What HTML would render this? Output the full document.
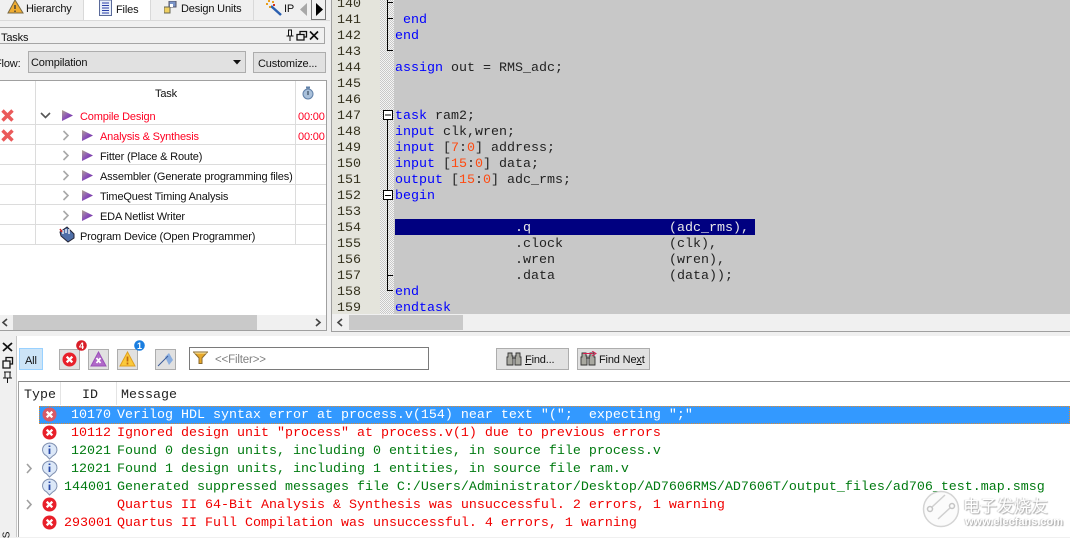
<!DOCTYPE html>
<html><head><meta charset="utf-8"><style>
html,body{margin:0;padding:0;width:1070px;height:537px;overflow:hidden;background:#f0f0f0}
div,span.a,svg{position:absolute}
.t{position:absolute;margin-top:1px;font:11px/16px "Liberation Sans",sans-serif;letter-spacing:-.16px;color:#111;white-space:pre}
.m{position:absolute;margin-top:2px;font:13.33px/16px "Liberation Mono",monospace;color:#222;white-space:pre}
.k{color:#0000ff}.n{color:#ff4a10}
.l{position:absolute;margin-top:2px;left:337px;font:13.33px/16px "Liberation Mono",monospace;color:#33301c}
.r{color:#ff0022}
.g{color:#007a10}.e{color:#f00000}
.id{width:47px;text-align:right;left:64px}
.btn{position:absolute;background:#e1e1e1;border:1px solid #adadad;box-sizing:border-box}
.hl{position:absolute;left:0;width:326px;height:1px;background:#dcdcdc}
</style></head><body>

<!-- tabs -->
<div style="left:0;top:0;width:330px;height:20px;background:#f0f0f0;border-bottom:1px solid #d9d9d9"></div>
<div style="left:83px;top:0;width:68px;height:21px;background:#fff;border:1px solid #d9d9d9;border-top:0;box-sizing:border-box"></div>
<div style="left:253px;top:0;width:1px;height:20px;background:#d9d9d9"></div>
<svg style="left:7px;top:0" width="17" height="14"><path d="M8 0L16 13H1Z" fill="#f0ac30" stroke="#7a6a45"/><path d="M8 5v4M8 10.500v1.500" stroke="#333" stroke-width="1.300"/></svg>
<span class="t" style="left:26px;top:0">Hierarchy</span>
<svg style="left:99px;top:0" width="13" height="16"><path d="M.5 0H12.500V15.500H.5Z" fill="#e8effa" stroke="#5a6a9a"/><path d="M3 3H10M3 5.500H10M3 8H10M3 10.500H10M3 13H10" stroke="#2a3fa8"/></svg>
<span class="t" style="left:116px;top:1px">Files</span>
<svg style="left:164px;top:1px" width="13" height="13"><rect x="5" y="0" width="7" height="6" fill="#7a94c8" stroke="#556"/><rect x="0" y="6" width="6" height="6" fill="#f0d060" stroke="#665"/><rect x="6" y="3" width="3" height="3" fill="#fff"/></svg>
<span class="t" style="left:181px;top:0">Design Units</span>
<svg style="left:265px;top:0" width="17" height="16"><path d="M6 6L16 15" stroke="#2a5fb0" stroke-width="2.500"/><path d="M3 1h2M1 4h2M7 2h2M4 7h2" stroke="#e8a020" stroke-width="2"/><path d="M8 5h2" stroke="#d03020" stroke-width="2"/></svg>
<span class="t" style="left:284px;top:0">IP</span>
<div style="left:296px;top:0;width:15px;height:20px;background:#f0f0f0"></div>
<div style="left:311px;top:0;width:15px;height:20px;background:#f0f0f0;border-left:1px solid #777;border-right:1px solid #777;border-bottom:1px solid #777;box-sizing:border-box"></div>
<svg style="left:299px;top:2px" width="9" height="15"><path d="M8 1V14L1 7.500Z" fill="#a8a8a8"/></svg>
<svg style="left:315px;top:2px" width="9" height="15"><path d="M1 1V14L8 7.500Z" fill="#000"/></svg>

<!-- tasks header -->
<div style="left:-1px;top:27px;width:326px;height:17px;border:1px solid #a5a5a5;box-sizing:border-box"></div>
<span class="t" style="left:1px;top:29px">Tasks</span>
<svg style="left:285px;top:29px" width="34" height="13" fill="none" stroke="#111"><path d="M3 1H7M3.500 1V7M6.500 1V7M1.500 7H8.500M5 7V12"/><path d="M12 5.500H19V11H12ZM15 5V2.500H21.500V8H19" stroke-width="1.300"/><path d="M25 2.500L33 10.500M33 2.500L25 10.500" stroke-width="1.600"/></svg>

<!-- flow -->
<span class="t" style="left:-5px;top:55px">Flow:</span>
<div class="btn" style="left:28px;top:51px;width:218px;height:22px"></div>
<span class="t" style="left:31px;top:54px">Compilation</span>
<svg style="left:233px;top:60px" width="8" height="5"><path d="M0 0H8L4 4.500Z" fill="#111"/></svg>
<div class="btn" style="left:253px;top:52px;width:73px;height:21px"></div>
<span class="t" style="left:258px;top:55px">Customize...</span>

<!-- task table -->
<div style="left:-1px;top:80px;width:328px;height:251px;background:#fff;border:1px solid #a0a0a0;box-sizing:border-box"></div>
<div style="left:35px;top:81px;width:1px;height:163px;background:#dcdcdc"></div>
<div style="left:295px;top:81px;width:1px;height:163px;background:#dcdcdc"></div>
<div style="left:326px;top:80px;width:1px;height:251px;background:#a0a0a0"></div>
<div class="hl" style="top:124px"></div><div class="hl" style="top:144px"></div><div class="hl" style="top:164px"></div><div class="hl" style="top:184px"></div><div class="hl" style="top:204px"></div><div class="hl" style="top:224px"></div><div class="hl" style="top:244px"></div>
<span class="t" style="left:155px;top:85px">Task</span>
<svg style="left:302px;top:86px" width="12" height="14"><circle cx="6" cy="8" r="5" fill="#a9c0da" stroke="#6080a8"/><path d="M6 5V9" stroke="#234" /><path d="M4 1.500H8" stroke="#6080a8" stroke-width="2"/></svg>

<svg style="left:1px;top:109px" width="13" height="13"><path d="M1.500 1.500L11.500 11.500M11.500 1.500L1.500 11.500" stroke="#ea5a5a" stroke-width="3.400"/></svg>
<svg style="left:1px;top:129px" width="13" height="13"><path d="M1.500 1.500L11.500 11.500M11.500 1.500L1.500 11.500" stroke="#ea5a5a" stroke-width="3.400"/></svg>
<svg style="left:40px;top:112px" width="11" height="7"><path d="M1 1L5.500 5.500L10 1" fill="none" stroke="#555" stroke-width="1.600"/></svg>
<svg style="left:61px;top:109px" width="13" height="13"><defs><linearGradient id="p" x1="0" y1="0" x2="1" y2="1"><stop offset="0" stop-color="#b0a890"/><stop offset=".5" stop-color="#8a50b8"/><stop offset="1" stop-color="#6a2a98"/></linearGradient></defs><path d="M1 1L12 6.500L1 12Z" fill="url(#p)"/></svg>
<span class="t r" style="left:80px;top:108px">Compile Design</span>
<span class="t r" style="left:298px;top:108px;width:28px;overflow:hidden">00:00</span>

<!-- sub rows -->
<svg style="left:62px;top:130px" width="8" height="110" fill="none" stroke="#a8a8a8" stroke-width="1.600"><path d="M1.500 1L6 5.500L1.500 10M1.500 21L6 25.500L1.500 30M1.500 41L6 45.500L1.500 50M1.500 61L6 65.500L1.500 70M1.500 81L6 85.500L1.500 90"/></svg>
<svg style="left:81px;top:129px" width="13" height="93"><path d="M1 1L12 6.500L1 12Z" fill="url(#p)"/><path d="M1 21L12 26.500L1 32Z" fill="url(#p)"/><path d="M1 41L12 46.500L1 52Z" fill="url(#p)"/><path d="M1 61L12 66.500L1 72Z" fill="url(#p)"/><path d="M1 81L12 86.500L1 92Z" fill="url(#p)"/></svg>
<span class="t r" style="left:100px;top:128px">Analysis &amp; Synthesis</span>
<span class="t r" style="left:298px;top:128px;width:28px;overflow:hidden">00:00</span>
<span class="t" style="left:100px;top:148px">Fitter (Place &amp; Route)</span>
<span class="t" style="left:100px;top:168px">Assembler (Generate programming files)</span>
<span class="t" style="left:100px;top:188px">TimeQuest Timing Analysis</span>
<span class="t" style="left:100px;top:208px">EDA Netlist Writer</span>
<svg style="left:59px;top:226px" width="17" height="17"><path d="M1 6L8 1L15 8V12L9 16L2 10Z" fill="#4f6fa8" stroke="#223"/><path d="M4 4V8M7 3V7M10 3V8" stroke="#fff" stroke-width="1.300"/><path d="M1 3L3 6" stroke="#d02020" stroke-width="1.500"/></svg>
<span class="t" style="left:80px;top:228px">Program Device (Open Programmer)</span>

<!-- left h scrollbar -->
<div style="left:0;top:315px;width:326px;height:15px;background:#f0f0f0"></div>
<div style="left:13px;top:315px;width:244px;height:15px;background:#c9c9c9"></div>
<svg style="left:1px;top:318px" width="8" height="9" fill="none" stroke="#444" stroke-width="1.600"><path d="M6 1L2 4.500L6 8"/></svg>
<svg style="left:314px;top:318px" width="8" height="9" fill="none" stroke="#444" stroke-width="1.600"><path d="M2 1L6 4.500L2 8"/></svg>

<!-- editor -->
<div style="left:331px;top:0;width:739px;height:332px;background:#f0f0f0;border-left:1px solid #a0a0a0;border-bottom:1px solid #a0a0a0;box-sizing:border-box"></div>
<div style="left:332px;top:0;width:738px;height:314px;overflow:hidden;background:#c8c8c8"></div>
<div style="left:332px;top:0;width:48px;height:314px;background:#e4e4dc"></div>
<div style="left:380px;top:0;width:14px;height:314px;background:repeating-conic-gradient(#f4f4f4 0 25%,#c8c8c8 0 50%) 0 0/2px 2px"></div>
<div style="left:395px;top:219px;width:360px;height:16px;background:#000080"></div>

<div style="left:0;top:0;width:1070px;height:314px;overflow:hidden">
<span class="l" style="top:-5px">140</span><span class="l" style="top:11px">141</span><span class="l" style="top:27px">142</span><span class="l" style="top:43px">143</span><span class="l" style="top:59px">144</span><span class="l" style="top:75px">145</span><span class="l" style="top:91px">146</span><span class="l" style="top:107px">147</span><span class="l" style="top:123px">148</span><span class="l" style="top:139px">149</span><span class="l" style="top:155px">150</span><span class="l" style="top:171px">151</span><span class="l" style="top:187px">152</span><span class="l" style="top:203px">153</span><span class="l" style="top:219px">154</span><span class="l" style="top:235px">155</span><span class="l" style="top:251px">156</span><span class="l" style="top:267px">157</span><span class="l" style="top:283px">158</span><span class="l" style="top:299px">159</span>
<span class="m k" style="left:403px;top:11px">end</span>
<span class="m k" style="left:395px;top:27px">end</span>
<span class="m" style="left:395px;top:59px"><span class="k">assign</span> out = RMS_adc;</span>
<span class="m" style="left:395px;top:107px"><span class="k">task</span> ram2;</span>
<span class="m" style="left:395px;top:123px"><span class="k">input</span> clk,wren;</span>
<span class="m" style="left:395px;top:139px"><span class="k">input</span> [<span class="n">7</span>:<span class="n">0</span>] address;</span>
<span class="m" style="left:395px;top:155px"><span class="k">input</span> [<span class="n">15</span>:<span class="n">0</span>] data;</span>
<span class="m" style="left:395px;top:171px"><span class="k">output</span> [<span class="n">15</span>:<span class="n">0</span>] adc_rms;</span>
<span class="m k" style="left:395px;top:187px">begin</span>
<span class="m" style="left:515px;top:219px;color:#e8e8e8">.q</span>
<span class="m" style="left:669px;top:219px;color:#e8e8e8">(adc_rms),</span>
<span class="m" style="left:515px;top:235px">.clock</span><span class="m" style="left:669px;top:235px">(clk),</span>
<span class="m" style="left:515px;top:251px">.wren</span><span class="m" style="left:669px;top:251px">(wren),</span>
<span class="m" style="left:515px;top:267px">.data</span><span class="m" style="left:669px;top:267px">(data));</span>
<span class="m k" style="left:395px;top:283px">end</span>
<span class="m k" style="left:395px;top:299px">endtask</span>
</div>

<!-- fold markers -->
<svg style="left:380px;top:0" width="15" height="300" fill="none" stroke="#000"><path d="M7.500 0V50.500H13M7.500 2.500H13M7.500 18.500H13"/><path d="M7.500 120V190M7.500 200V290.500H13M7.500 275.500H13"/><rect x="3.500" y="110.500" width="9" height="9" fill="#fff"/><path d="M5 115H11"/><rect x="3.500" y="190.500" width="9" height="9" fill="#fff"/><path d="M5 195.500H11"/></svg>

<!-- editor scrollbar -->
<div style="left:349px;top:315px;width:114px;height:15px;background:#c9c9c9"></div>
<svg style="left:336px;top:318px" width="8" height="9" fill="none" stroke="#444" stroke-width="1.600"><path d="M6 1L2 4.500L6 8"/></svg>

<!-- bottom panel -->
<div style="left:16px;top:336px;width:1054px;height:201px;background:#fff;border-left:1px solid #c8c8c8;box-sizing:border-box"></div>
<div style="left:18px;top:381px;width:1052px;height:1px;background:#8c8c8c"></div>
<div style="left:18px;top:381px;width:1px;height:156px;background:#a0a0a0"></div>
<svg style="left:1px;top:341px" width="13" height="42" fill="none" stroke="#111"><path d="M2 2L11 10M11 2L2 10" stroke-width="1.800"/><path d="M2 20H9V27H2ZM5 20V16.500H11.500V23H9" stroke-width="1.300"/><path d="M3 31H10M4 31V37M9 31V37M2 37H11M6.500 37V42"/></svg>
<span class="t" style="left:4px;top:526px;font-size:10px;transform:rotate(-90deg)">S</span>

<!-- filter toolbar -->
<div style="left:19px;top:348px;width:24px;height:22px;background:#cce4f7;border:1px solid #99d1ff;box-sizing:border-box"></div>
<span class="t" style="left:25px;top:352px">All</span>
<div class="btn" style="left:59px;top:349px;width:21px;height:21px"></div>
<svg style="left:62px;top:352px" width="15" height="15"><circle cx="7.500" cy="7.500" r="7" fill="#e8202a"/><path d="M4.700 4.700L10.300 10.300M10.300 4.700L4.700 10.300" stroke="#fff" stroke-width="2.300"/></svg>
<div class="btn" style="left:88px;top:349px;width:21px;height:21px"></div>
<svg style="left:90px;top:351px" width="17" height="16"><path d="M8.500 1L16 15H1Z" fill="#b068c8" stroke="#9a50b8"/><path d="M6.500 7L10.500 12M10.500 7L6.500 12" stroke="#fff" stroke-width="1.800"/></svg>
<div class="btn" style="left:117px;top:349px;width:21px;height:21px"></div>
<svg style="left:119px;top:351px" width="17" height="16"><path d="M8.500 1L16 15H1Z" fill="#fbc93a" stroke="#e0a020"/><path d="M8.500 5.500V10.500M8.500 11.500V13.500" stroke="#c06a10" stroke-width="1.700"/></svg>
<div class="btn" style="left:155px;top:349px;width:21px;height:21px"></div>
<svg style="left:157px;top:351px" width="17" height="17"><path d="M8 6L12 2L16 9L12 14Z" fill="#8aaee0"/><path d="M1 15L11 5" stroke="#3a5a98"/></svg>
<svg style="left:76px;top:340px" width="11" height="11"><circle cx="5.500" cy="5.500" r="5.300" fill="#d81e28"/><text x="5.500" y="8.800" font-family="Liberation Sans" font-size="9" font-weight="bold" text-anchor="middle" fill="#fff">4</text></svg>
<svg style="left:134px;top:340px" width="11" height="11"><circle cx="5.500" cy="5.500" r="5.300" fill="#1a7ee0"/><text x="5.500" y="8.800" font-family="Liberation Sans" font-size="9" font-weight="bold" text-anchor="middle" fill="#fff">1</text></svg>
<div style="left:189px;top:347px;width:240px;height:23px;background:#fff;border:1px solid #7a7a7a;box-sizing:border-box"></div>
<svg style="left:193px;top:351px" width="15" height="14"><path d="M.5 1H14.500L9 7V12.500H6V7Z" fill="#e8a828" stroke="#8a6a30"/><path d="M1.500 2H13.500" stroke="#fff0b0"/></svg>
<span class="t" style="left:215px;top:351px;color:#808080;font-size:11.5px">&lt;&lt;Filter&gt;&gt;</span>

<div class="btn" style="left:496px;top:348px;width:73px;height:22px"></div>
<svg style="left:506px;top:352px" width="16" height="14"><path d="M2 1H6V4H7V13H1V5H2ZM10 1H14V5H15V13H9V4H10Z" fill="#a8a8a0" stroke="#333" stroke-width=".9"/><path d="M6 6H10" stroke="#333"/></svg>
<span class="t" style="left:525px;top:351px"><u>F</u>ind...</span>
<div class="btn" style="left:577px;top:348px;width:73px;height:22px"></div>
<svg style="left:580px;top:351px" width="17" height="15"><path d="M2 2H6V5H7V14H1V6H2ZM10 2H14V6H15V14H9V5H10Z" fill="#a8a8a0" stroke="#333" stroke-width=".9"/><path d="M6 7H10" stroke="#333"/><path d="M3 2.500H13M12 0L16 2.500L12 5" fill="none" stroke="#d81e50"/></svg>
<span class="t" style="left:599px;top:351px">Find Ne<u>x</u>t</span>

<!-- message header -->
<span class="m" style="left:24px;top:386px">Type</span>
<span class="m" style="left:82px;top:386px">ID</span>
<span class="m" style="left:121px;top:386px">Message</span>
<div style="left:60px;top:382px;width:1px;height:23px;background:#e4e4e4"></div>
<div style="left:116px;top:382px;width:1px;height:23px;background:#e4e4e4"></div>

<!-- messages -->
<div style="left:39px;top:406px;width:1031px;height:18px;background:#3399ff;outline:1px dotted #e08a30;outline-offset:-1px"></div>
<svg style="left:42px;top:407px" width="15" height="15"><circle cx="7.500" cy="7.500" r="7" fill="#d65a68"/><path d="M4.700 4.700L10.300 10.300M10.300 4.700L4.700 10.300" stroke="#fff" stroke-width="2.300"/></svg>
<svg style="left:42px;top:425px" width="15" height="15"><circle cx="7.500" cy="7.500" r="7" fill="#e8202a"/><path d="M4.700 4.700L10.300 10.300M10.300 4.700L4.700 10.300" stroke="#fff" stroke-width="2.300"/></svg>
<svg style="left:41px;top:442px" width="17" height="18"><path d="M8.500 1A7.500 6.800 0 0 1 12 13.800L8.500 17L5.500 13.800A7.500 6.800 0 0 1 8.500 1Z" fill="#dce8f8" stroke="#8090b0"/><path d="M8.500 6.500V12M8.500 3.500V5" stroke="#2a4aa8" stroke-width="1.800"/></svg>
<svg style="left:41px;top:460px" width="17" height="18"><path d="M8.500 1A7.500 6.800 0 0 1 12 13.800L8.500 17L5.500 13.800A7.500 6.800 0 0 1 8.500 1Z" fill="#dce8f8" stroke="#8090b0"/><path d="M8.500 6.500V12M8.500 3.500V5" stroke="#2a4aa8" stroke-width="1.800"/></svg>
<svg style="left:41px;top:478px" width="17" height="18"><path d="M8.500 1A7.500 6.800 0 0 1 12 13.800L8.500 17L5.500 13.800A7.500 6.800 0 0 1 8.500 1Z" fill="#dce8f8" stroke="#8090b0"/><path d="M8.500 6.500V12M8.500 3.500V5" stroke="#2a4aa8" stroke-width="1.800"/></svg>
<svg style="left:42px;top:497px" width="15" height="15"><circle cx="7.500" cy="7.500" r="7" fill="#e8202a"/><path d="M4.700 4.700L10.300 10.300M10.300 4.700L4.700 10.300" stroke="#fff" stroke-width="2.300"/></svg>
<svg style="left:42px;top:515px" width="15" height="15"><circle cx="7.500" cy="7.500" r="7" fill="#e8202a"/><path d="M4.700 4.700L10.300 10.300M10.300 4.700L4.700 10.300" stroke="#fff" stroke-width="2.300"/></svg>
<svg style="left:25px;top:463px" width="8" height="11" fill="none" stroke="#a0a0a0" stroke-width="1.600"><path d="M2 1L6 5.500L2 10"/></svg>
<svg style="left:25px;top:499px" width="8" height="11" fill="none" stroke="#a0a0a0" stroke-width="1.600"><path d="M2 1L6 5.500L2 10"/></svg>

<span class="m id" style="top:406px;color:#fff">10170</span><span class="m" style="left:117px;top:406px;color:#fff">Verilog HDL syntax error at process.v(154) near text "(";  expecting ";"</span>
<span class="m id e" style="top:424px">10112</span><span class="m e" style="left:117px;top:424px">Ignored design unit "process" at process.v(1) due to previous errors</span>
<span class="m id g" style="top:442px">12021</span><span class="m g" style="left:117px;top:442px">Found 0 design units, including 0 entities, in source file process.v</span>
<span class="m id g" style="top:460px">12021</span><span class="m g" style="left:117px;top:460px">Found 1 design units, including 1 entities, in source file ram.v</span>
<span class="m id g" style="top:478px">144001</span><span class="m g" style="left:117px;top:478px">Generated suppressed messages file C:/Users/Administrator/Desktop/AD7606RMS/AD7606T/output_files/ad706_test.map.smsg</span>
<span class="m e" style="left:117px;top:496px">Quartus II 64-Bit Analysis &amp; Synthesis was unsuccessful. 2 errors, 1 warning</span>
<span class="m id e" style="top:514px">293001</span><span class="m e" style="left:117px;top:514px">Quartus II Full Compilation was unsuccessful. 4 errors, 1 warning</span>

<!-- watermark -->
<svg style="left:920px;top:488px" width="42" height="42" fill="none"><circle cx="21" cy="21" r="17.500" fill="#fbfbfb" stroke="#d4d4d4" stroke-width="1.500"/><path d="M12 19L25 7M30 20L18 31" stroke="#cfcfcf" stroke-width="1.500"/><circle cx="10" cy="21" r="2.500" stroke="#c4c4c4" stroke-width="1.500"/><circle cx="32" cy="18" r="2.500" stroke="#c4c4c4" stroke-width="1.500"/></svg>
<span class="t" style="left:963px;top:494px;font:17px/20px 'Noto Sans CJK SC',sans-serif;letter-spacing:0;color:#fff;text-shadow:1px 1px 1px #aaa,-1px 0 1px #ccc">电子发烧友</span>
<span class="t" style="left:965px;top:513px;font:bold 11px/16px 'Liberation Sans',sans-serif;letter-spacing:0;color:#fff;text-shadow:1px 1px 1px #a8a8a8,-1px 0 1px #ccc">www.elecfans.com</span>
</body></html>
